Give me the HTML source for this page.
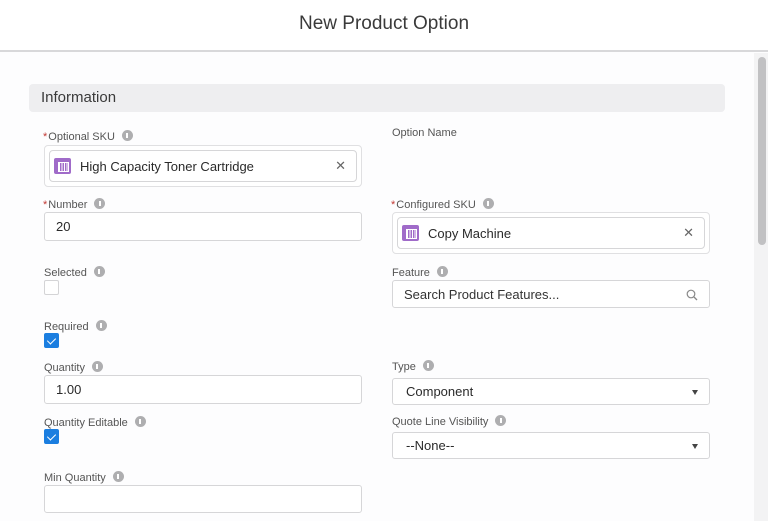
<!DOCTYPE html>
<html><head><meta charset="utf-8"><style>
*{box-sizing:border-box;margin:0;padding:0}
body{width:768px;height:521px;overflow:hidden;background:#fdfdfe;font-family:"Liberation Sans",sans-serif;color:#16325c;position:relative}
.a{position:absolute}
.hdr{left:0;top:0;width:768px;height:52px;background:#fff;border-bottom:2px solid #d8d8da}
.title{left:0;top:13px;width:768px;text-align:center;font-size:19px;color:#3a3a3a}
.sec{left:29px;top:84px;width:696px;height:28px;background:#eeeef0;border-radius:4px}
.sec span{position:absolute;left:12px;top:5px;font-size:15px;color:#3a3a3a}
.lbl{font-size:11px;color:#555;white-space:nowrap}
.lbl .r{color:#c23934;margin-right:1px}
.i{display:inline-block;width:11px;height:11px;border-radius:50%;background:#aeaeb0;margin-left:7px;vertical-align:-1px;position:relative}
.i::after{content:"";position:absolute;left:4.5px;top:3px;width:2px;height:5px;background:#fff}
.inp{border:1px solid #d6d6d8;border-radius:3px;background:#fff;font-size:13px;color:#2a2a2a;padding-left:11px;display:flex;align-items:center}
.outer{border:1px solid #e0e0e2;border-radius:4px;background:#fff}
.pill{border:1px solid #d6d6d8;border-radius:4px;background:#fff;display:flex;align-items:center;font-size:13px;color:#2a2a2a}
.ic{width:17px;height:16px;background:#a06bc9;border-radius:2px;margin:0 9px 0 4px;position:relative}
.ic::after{content:"";position:absolute;left:4px;top:4px;width:9px;height:8px;border:1px solid #fff;background:repeating-linear-gradient(90deg,#fff 0 1px,transparent 1px 2.5px)}
.x{position:absolute;right:10px;top:7px;font-size:13px;color:#666}
.cb{width:15px;height:15px;border:1px solid #d4d4d6;border-radius:2px;background:#fff}
.cb.on{background:#1b7ee0;border-color:#1b7ee0}
.cb.on::after{content:"";position:absolute;left:4px;top:2px;width:4px;height:7px;border:solid #fff;border-width:0 1.5px 1.5px 0;transform:rotate(45deg)}
.arr{position:absolute;right:11px;top:11px;width:0;height:0;border-left:3.5px solid transparent;border-right:3.5px solid transparent;border-top:5px solid #444}
</style></head><body>
<div class="a hdr"></div>
<div class="a title">New Product Option</div>
<div class="a" style="left:754px;top:53px;width:14px;height:468px;background:#f3f3f4"></div>
<div class="a" style="left:758px;top:57px;width:8px;height:188px;background:#c1c1c3;border-radius:4px"></div>
<div class="a sec"><span>Information</span></div>

<div class="a lbl" style="left:43px;top:130px"><span class="r">*</span>Optional SKU<span class="i"></span></div>
<div class="a outer" style="left:44px;top:145px;width:318px;height:42px"></div>
<div class="a pill" style="left:49px;top:150px;width:308px;height:32px"><div class="ic"></div>High Capacity Toner Cartridge<span class="x">✕</span></div>
<div class="a lbl" style="left:392px;top:127px">Option Name</div>

<div class="a lbl" style="left:43px;top:198px"><span class="r">*</span>Number<span class="i"></span></div>
<div class="a inp" style="left:44px;top:212px;width:318px;height:29px">20</div>
<div class="a lbl" style="left:391px;top:198px"><span class="r">*</span>Configured SKU<span class="i"></span></div>
<div class="a outer" style="left:392px;top:212px;width:318px;height:42px"></div>
<div class="a pill" style="left:397px;top:217px;width:308px;height:32px"><div class="ic"></div>Copy Machine<span class="x">✕</span></div>

<div class="a lbl" style="left:44px;top:266px">Selected<span class="i"></span></div>
<div class="a cb" style="left:44px;top:280px"></div>
<div class="a lbl" style="left:392px;top:266px">Feature<span class="i"></span></div>
<div class="a inp" style="left:392px;top:280px;width:318px;height:28px;color:#333">Search Product Features...
<svg style="position:absolute;right:11px;top:8px" width="12" height="12" viewBox="0 0 12 12"><circle cx="5" cy="5" r="3.8" fill="none" stroke="#888" stroke-width="1.2"/><path d="M8 8l3 3" stroke="#888" stroke-width="1.3"/></svg></div>

<div class="a lbl" style="left:44px;top:320px">Required<span class="i"></span></div>
<div class="a cb on" style="left:44px;top:333px"></div>

<div class="a lbl" style="left:44px;top:361px">Quantity<span class="i"></span></div>
<div class="a inp" style="left:44px;top:375px;width:318px;height:29px">1.00</div>
<div class="a lbl" style="left:392px;top:360px">Type<span class="i"></span></div>
<div class="a inp" style="left:392px;top:378px;width:318px;height:27px;padding-left:13px">Component<span class="arr"></span></div>

<div class="a lbl" style="left:44px;top:416px">Quantity Editable<span class="i"></span></div>
<div class="a cb on" style="left:44px;top:429px"></div>
<div class="a lbl" style="left:392px;top:415px">Quote Line Visibility<span class="i"></span></div>
<div class="a inp" style="left:392px;top:432px;width:318px;height:27px;padding-left:13px">--None--<span class="arr"></span></div>

<div class="a lbl" style="left:44px;top:471px">Min Quantity<span class="i"></span></div>
<div class="a inp" style="left:44px;top:485px;width:318px;height:28px"></div>
</body></html>
